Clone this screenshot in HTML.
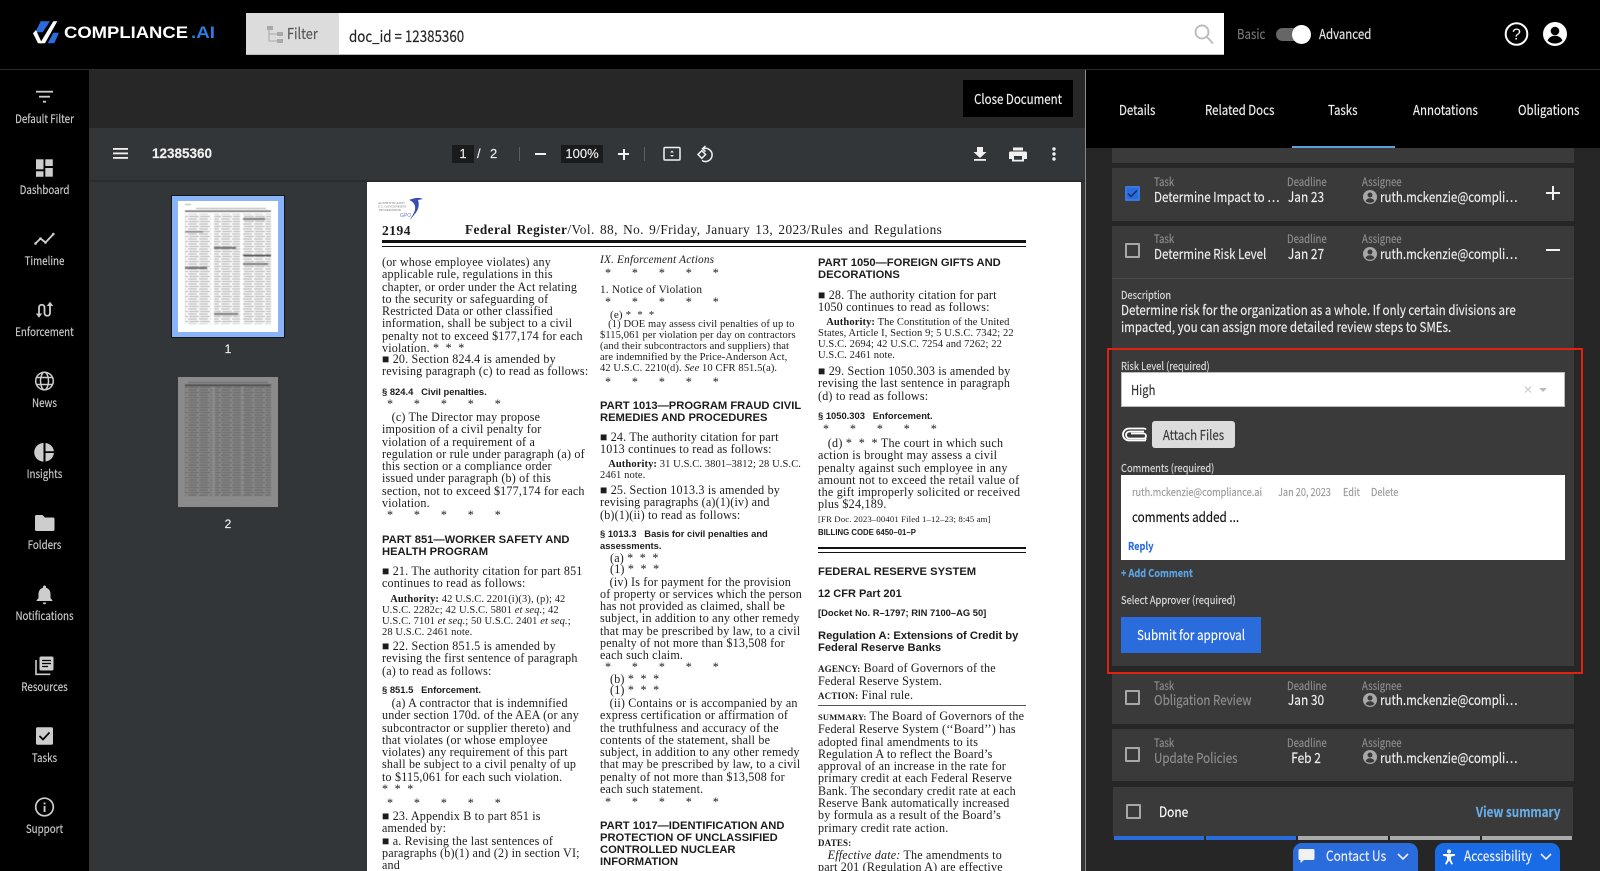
<!DOCTYPE html>
<html><head><meta charset="utf-8"><title>Compliance.ai</title>
<style>
html,body{margin:0;padding:0;background:#000}
body{width:1600px;height:871px;position:relative;overflow:hidden;font-family:"Noto Sans CJK JP","Liberation Sans",sans-serif;color:#fff}
div,span,svg{box-sizing:border-box}
.a{position:absolute}
.t{position:absolute;white-space:nowrap;line-height:20px;transform:scaleX(.85);transform-origin:0 50%;-webkit-text-stroke:.15px currentColor}
.t.c{transform-origin:50% 50%}
.t.rt{transform-origin:100% 50%}
.t.r{transform:none}
.nl{position:absolute;left:0;width:89px;text-align:center;font-size:11.500px;line-height:16px;color:#ccc;transform:scaleX(.85);transform-origin:50% 50%;white-space:nowrap;-webkit-text-stroke:.15px currentColor}
.r{font-family:"Liberation Sans",sans-serif}
.card{position:absolute;left:1112px;width:462px;background:#3a3a3a}
.cb{position:absolute;left:1125px;width:15px;height:15px;border:2px solid #a8a8a8;border-radius:1px}
.lb{font-size:11.300px;color:#8e8e8e}
.ti{font-size:13.600px;color:#eee}
.dt{font-size:14px;color:#eee;width:60px;text-align:center;left:1276px;transform-origin:50% 50%}
.em{font-size:13.600px;color:#eee;left:1380px}
.fl{font-size:11px;color:#ddd}
.mt{font-size:10.800px;color:#9a9a9a}
#doc{position:absolute;left:367px;top:182px;width:714px;height:689px;background:#fff;overflow:hidden}
#pg{position:absolute;left:-367px;top:-182px;width:1600px;height:871px;color:#1c1c1c}
#pg div{position:absolute;white-space:nowrap;font:12.1px/12.3px "Liberation Serif",serif;letter-spacing:.18px}
#pg div.s{font-size:10.500px;line-height:10.950px;letter-spacing:.1px}
#pg div.h{font:bold 11.200px/12.300px "Liberation Sans",sans-serif;letter-spacing:0}
#pg div.hs{font:bold 9.400px/12px "Liberation Sans",sans-serif;letter-spacing:0}
#pg div.ln{background:#111}
#pg div.st{word-spacing:17.500px}
</style></head><body>

<!-- header -->
<div class="a" style="left:0;top:0;width:1600px;height:69px;background:#000"></div>
<div class="a" style="left:0;top:69px;width:1600px;height:1px;background:#2c2c2c"></div>
<svg class="a" style="left:30px;top:18px" width="34" height="30" viewBox="0 0 34 30">
<polygon points="10.700,3.300 20,3.300 12.700,14.300 5.300,14.300" fill="#2a6cdc"/>
<polygon points="23.300,14.700 29,14.700 24.300,25.300 17.700,25.300" fill="#2a6cdc"/>
<polygon points="23.300,3.300 27.300,3.300 15,25.300 10,25.300" fill="#fff"/>
<polygon points="3,15.300 6,12 12,25.300 8,25.300" fill="#fff"/>
</svg>
<svg class="a" style="left:60px;top:18px" width="165" height="28"><text x="4" y="20" font-family="Liberation Sans" font-weight="700" font-size="17" fill="#fff" textLength="124" lengthAdjust="spacingAndGlyphs">COMPLIANCE</text><text x="131" y="20" font-family="Liberation Sans" font-weight="700" font-size="17" fill="#2a7de1" textLength="24" lengthAdjust="spacingAndGlyphs">.AI</text></svg>
<div class="a" style="left:246px;top:13px;width:93px;height:42px;background:#dcdcdc;border-bottom:1px solid #bbb"></div>
<div class="a" style="left:339px;top:13px;width:885px;height:42px;background:#fff;border-bottom:1px solid #bbb"></div>
<svg class="a" style="left:266px;top:25px" width="18" height="19" fill="#a9a9a9"><rect x="1" y="1" width="6" height="4"/><rect x="11" y="7" width="6" height="4"/><rect x="11" y="14" width="6" height="4"/><path d="M3 5v11h8M3 9h8" fill="none" stroke="#a9a9a9" stroke-width="1"/></svg>
<div class="t" style="left:287px;top:24px;font-size:15px;color:#555">Filter</div>
<div class="t" style="left:349px;top:26px;font-size:15.700px;color:#222">doc_id = 12385360</div>
<svg class="a" style="left:1192px;top:22px" width="24" height="24" fill="none" stroke="#bdbdbd" stroke-width="2"><circle cx="10" cy="10" r="6.500"/><path d="M15 15l6 6.500"/></svg>
<div class="t" style="left:1237px;top:23px;font-size:13.500px;color:#777">Basic</div>
<div class="a" style="left:1276px;top:28px;width:30px;height:13px;border-radius:7px;background:#666"></div>
<div class="a" style="left:1292px;top:25px;width:19px;height:19px;border-radius:50%;background:#fff"></div>
<div class="t" style="left:1319px;top:23px;font-size:13.500px;color:#e6e6e6">Advanced</div>
<svg class="a" style="left:1503px;top:21px" width="27" height="26"><circle cx="13.500" cy="13" r="10.800" fill="none" stroke="#fff" stroke-width="2"/><text x="13.500" y="18.500" text-anchor="middle" font-family="Liberation Sans" font-size="16" fill="#fff">?</text></svg>
<svg class="a" style="left:1543px;top:22px" width="24" height="24"><circle cx="12" cy="12" r="12" fill="#fff"/><circle cx="12" cy="9" r="4.300" fill="#000"/><path d="M4.500 18.500c1.500-3.500 4.500-4.800 7.500-4.800s6 1.300 7.500 4.800c-2 2-4.500 3-7.500 3s-5.500-1-7.500-3z" fill="#000"/></svg>

<!-- sidebar -->
<div class="a" style="left:0;top:70px;width:89px;height:801px;background:#000"></div>
<svg class="a" style="left:0;top:70px" width="89" height="801" fill="#cdcdcd">
<g transform="translate(0,-70)">
<rect x="36" y="90.800" width="17" height="1.800"/><rect x="39" y="95.800" width="11" height="1.800"/><rect x="43" y="100.800" width="3" height="1.800"/>
<rect x="36" y="159.300" width="7.500" height="10"/><rect x="45.300" y="159.300" width="7.500" height="6.700"/><rect x="36" y="171.300" width="7.500" height="5.500"/><rect x="45.300" y="168" width="7.500" height="8.700"/>
<path d="M35.500 243.500l5-5 5 4 8-8.500" fill="none" stroke="#cdcdcd" stroke-width="1.900"/><circle cx="35.500" cy="243.500" r="1.300"/><circle cx="40.500" cy="238.500" r="1.300"/><circle cx="45.500" cy="242.500" r="1.300"/><circle cx="53.300" cy="234" r="1.300"/>
<path d="M39 315v-8a2.800 2.800 0 0 1 5.500 0v6.500a2.800 2.800 0 0 0 5.500 0v-9" fill="none" stroke="#cdcdcd" stroke-width="1.800"/><path d="M35.800 313.500h6.400l-3.200 4.200zM46.800 306h6.400l-3.200-4.200z"/>
<g fill="none" stroke="#cdcdcd" stroke-width="1.500"><circle cx="44.500" cy="381" r="8.800"/><ellipse cx="44.500" cy="381" rx="4" ry="8.800"/><path d="M36.500 377.500h16M36.500 384.500h16"/></g>
<path d="M43.500 443v18.600a9.300 9.300 0 0 1 0-18.600zM45.500 443a9.300 9.300 0 0 1 8.400 8.300h-8.400zM45.500 453h8.400a9.300 9.300 0 0 1-8.400 8.500z"/>
<path d="M36.500 515h6l2.500 2.500h8a1.500 1.500 0 0 1 1.500 1.500v10.500a1.500 1.500 0 0 1-1.500 1.500h-16.500a1.500 1.500 0 0 1-1.500-1.500v-13a1.500 1.500 0 0 1 1.500-1.500z"/>
<path d="M44.500 585.500a1.500 1.500 0 0 1 1.500 1.500v.7c3 .8 4.500 3.300 4.500 6.300v4l2 2.500v.5h-16v-.5l2-2.500v-4c0-3 1.500-5.500 4.500-6.300v-.7a1.500 1.500 0 0 1 1.500-1.500zM42.800 602.500h3.400a1.700 1.700 0 0 1-3.400 0z"/>
<rect x="39.500" y="656.500" width="14" height="14" rx="1.500"/><path d="M36 660v14.300h14.300" fill="none" stroke="#cdcdcd" stroke-width="1.600"/><path d="M42 660.500h9M42 663.500h9M42 666.500h6" stroke="#000" stroke-width="1.300"/>
<rect x="36" y="727.300" width="17" height="17.500" rx="1.500"/><path d="M39.500 736l3.500 3.500 6.500-7" fill="none" stroke="#000" stroke-width="1.700"/>
<circle cx="44.500" cy="807" r="8.800" fill="none" stroke="#cdcdcd" stroke-width="1.700"/><rect x="43.600" y="806" width="1.900" height="6"/><rect x="43.600" y="802.500" width="1.900" height="1.900"/>
</g></svg>
<div class="nl" style="top:110.500px">Default Filter</div>
<div class="nl" style="top:182px">Dashboard</div>
<div class="nl" style="top:253px">Timeline</div>
<div class="nl" style="top:324px">Enforcement</div>
<div class="nl" style="top:395px">News</div>
<div class="nl" style="top:466px">Insights</div>
<div class="nl" style="top:537px">Folders</div>
<div class="nl" style="top:608px">Notifications</div>
<div class="nl" style="top:679px">Resources</div>
<div class="nl" style="top:750px">Tasks</div>
<div class="nl" style="top:821px">Support</div>

<!-- viewer -->
<div class="a" style="left:89px;top:70px;width:996px;height:58px;background:#272727"></div>
<div class="a" style="left:89px;top:128px;width:996px;height:743px;background:#323639"></div>
<div class="a" style="left:89px;top:180px;width:996px;height:2px;background:#2a2d30"></div>
<div class="a" style="left:963px;top:80px;width:110px;height:37px;background:#000"></div>
<div class="t c" style="left:963px;top:88px;width:110px;text-align:center;font-size:13.500px;color:#f2f2f2">Close Document</div>
<svg class="a" style="left:112px;top:147px" width="18" height="13" fill="#f1f1f1"><rect x="1" y="1" width="15" height="1.800"/><rect x="1" y="5.500" width="15" height="1.800"/><rect x="1" y="10" width="15" height="1.800"/></svg>
<div class="t r" style="left:152px;top:144px;font-size:13.500px;font-weight:700;color:#f1f1f1">12385360</div>
<div class="a" style="left:452px;top:145px;width:22px;height:18px;background:#191b1c"></div>
<div class="t r" style="left:452px;top:144px;width:22px;text-align:center;font-size:13px;color:#f1f1f1">1</div>
<div class="t r" style="left:477px;top:144px;font-size:13px;color:#f1f1f1">/</div>
<div class="t r" style="left:490px;top:144px;font-size:13px;color:#f1f1f1">2</div>
<div class="a" style="left:519px;top:147px;width:1px;height:14px;background:#5c5f61"></div>
<div class="a" style="left:535px;top:153px;width:11px;height:2px;background:#f1f1f1"></div>
<div class="a" style="left:561px;top:145px;width:42px;height:18px;background:#191b1c"></div>
<div class="t r" style="left:561px;top:144px;width:42px;text-align:center;font-size:13px;color:#f1f1f1">100%</div>
<div class="a" style="left:618px;top:153px;width:11px;height:2px;background:#f1f1f1"></div>
<div class="a" style="left:622.500px;top:148.500px;width:2px;height:11px;background:#f1f1f1"></div>
<div class="a" style="left:644px;top:147px;width:1px;height:14px;background:#5c5f61"></div>
<svg class="a" style="left:663px;top:145px" width="60" height="18" fill="none" stroke="#f1f1f1" stroke-width="1.500"><rect x="1" y="2.500" width="16" height="12.500" rx="1"/><path d="M7 7.500l2-2 2 2zM7 10l2 2 2-2z" fill="#f1f1f1" stroke="none"/><path d="M35 9.500l3.800-3.800 3.800 3.800-3.800 3.800z"/><path d="M40 3.800a6.600 6.600 0 1 1-1 11.700"/><path d="M42.500 1l-3 2.800 3 2.800"/></svg>
<svg class="a" style="left:972px;top:145px" width="60" height="18" fill="#f1f1f1"><path d="M5 2h6v5h3.500l-6.500 6-6.500-6H5z"/><rect x="2" y="14" width="12" height="1.800"/><path d="M41 2.500h10v3H41zM38.500 6.500h15a1.500 1.500 0 0 1 1.500 1.500v6h-3v2.500H40V14h-3V8a1.500 1.500 0 0 1 1.500-1.500zM42 11v3.800h8V11z"/></svg>
<svg class="a" style="left:1050px;top:145px" width="8" height="18" fill="#f1f1f1"><circle cx="4" cy="4" r="1.700"/><circle cx="4" cy="9" r="1.700"/><circle cx="4" cy="14" r="1.700"/></svg>

<!-- thumbnails -->
<div class="a" style="left:172px;top:196px;width:112px;height:141px;background:#8ab4f8;box-shadow:0 0 0 1px #15171a"></div>
<div class="a" style="left:178px;top:201px;width:100px;height:131px;background:#fff"></div>
<svg class="a" style="left:178px;top:201px;filter:blur(.4px)" width="100" height="131">
<defs><pattern id="p1" width="11" height="5" patternUnits="userSpaceOnUse"><rect width="10" height="1" fill="#a4a4a4"/><rect x="-4" y="2.500" width="12" height="1" fill="#a4a4a4"/><rect x="10" y="2.500" width="1" height="1" fill="#a4a4a4"/></pattern></defs>
<rect x="7" y="3" width="6" height="1" fill="#aaa"/><rect x="18" y="7" width="70" height="1" fill="#aaa"/><rect x="7" y="9.500" width="86" height="1.300" fill="#555"/>
<rect x="7" y="13" width="26" height="110" fill="url(#p1)"/><rect x="36" y="13" width="26" height="110" fill="url(#p1)"/><rect x="65" y="13" width="28" height="110" fill="url(#p1)"/>
<rect x="65" y="54" width="28" height="1" fill="#111"/><rect x="7" y="30" width="18" height="1.500" fill="#777"/><rect x="7" y="66" width="22" height="2" fill="#777"/><rect x="36" y="46" width="22" height="2" fill="#777"/><rect x="65" y="17" width="22" height="2" fill="#777"/><rect x="65" y="62" width="25" height="2" fill="#777"/><rect x="36" y="112" width="24" height="2" fill="#777"/>
</svg>
<div class="t r" style="left:172px;top:339px;width:112px;text-align:center;font-size:12px;color:#f1f1f1">1</div>
<div class="a" style="left:177.500px;top:376.500px;width:100px;height:130px;background:#8b8b8b"></div>
<svg class="a" style="left:177.500px;top:376.500px;filter:blur(.5px)" width="100" height="130">
<defs><pattern id="p2" width="11" height="5" patternUnits="userSpaceOnUse"><rect width="10" height="1.200" fill="#666"/><rect x="-4" y="2.500" width="12" height="1.200" fill="#666"/><rect x="10" y="2.500" width="1" height="1.200" fill="#666"/></pattern></defs>
<rect x="10" y="5" width="80" height="1" fill="#6b6b6b"/><rect x="7" y="7.500" width="86" height="1.600" fill="#444"/>
<rect x="7" y="10" width="27" height="110" fill="url(#p2)"/><rect x="37" y="10" width="26" height="110" fill="url(#p2)"/><rect x="65" y="10" width="28" height="110" fill="url(#p2)"/>
</svg>
<div class="t r" style="left:172px;top:513.500px;width:112px;text-align:center;font-size:12px;color:#f1f1f1">2</div>

<!-- document page -->
<div id="doc"><div id="pg">
<svg class="a" style="left:377px;top:196px" width="50" height="28" fill="none"><g fill="#777" font-family="Liberation Serif" font-size="3.200"><text x="1" y="8">AUTHENTICATED</text><text x="1" y="11.500">U.S. GOVERNMENT</text><text x="2" y="15">INFORMATION</text></g><text x="23" y="21" fill="#6a7cc9" font-family="Liberation Sans" font-size="5">GPO</text><path d="M32 4c5-2 10-3 14-1l-5 1c2 5 0 11-4 15l-4 5c2-5 6-8 5-14-1-3-3-5-6-6z" fill="#3a4db0"/></svg>
<div style="left:382px;top:224px;font:bold 13.500px/14px 'Liberation Serif',serif;letter-spacing:.5px">2194</div>
<div style="left:465px;top:223px;font:13.300px/14px 'Liberation Serif',serif;letter-spacing:.42px;word-spacing:1.500px"><b>Federal Register</b>/Vol. 88, No. 9/Friday, January 13, 2023/Rules and Regulations</div>
<div class="ln" style="left:382px;top:240px;width:643.500px;height:3px"></div>
<div class="ln" style="left:382px;top:246px;width:643.500px;height:1px"></div>

<!-- column 1 -->
<div style="left:382px;top:256px">(or whose employee violates) any<br>applicable rule, regulations in this<br>chapter, or order under the Act relating<br>to the security or safeguarding of<br>Restricted Data or other classified<br>information, shall be subject to a civil<br>penalty not to exceed $177,174 for each<br>violation. *&nbsp; *&nbsp; *</div>
<div style="left:382px;top:353px">■ 20. Section 824.4 is amended by<br>revising paragraph (c) to read as follows:</div>
<div class="hs" style="left:382px;top:386px">§ 824.4&nbsp;&nbsp; Civil penalties.</div>
<div class="st" style="left:387px;top:398px">* * * * *</div>
<div style="left:382px;top:411px">&nbsp;&nbsp;&nbsp;(c) The Director may propose<br>imposition of a civil penalty for<br>violation of a requirement of a<br>regulation or rule under paragraph (a) of<br>this section or a compliance order<br>issued under paragraph (b) of this<br>section, not to exceed $177,174 for each<br>violation.</div>
<div class="st" style="left:387px;top:509px">* * * * *</div>
<div class="h" style="left:382px;top:534px">PART 851—WORKER SAFETY AND<br>HEALTH PROGRAM</div>
<div style="left:382px;top:565px">■ 21. The authority citation for part 851<br>continues to read as follows:</div>
<div class="s" style="left:382px;top:595px">&nbsp;&nbsp;&nbsp;<b>Authority:</b> 42 U.S.C. 2201(i)(3), (p); 42<br>U.S.C. 2282c; 42 U.S.C. 5801 <i>et seq.</i>; 42<br>U.S.C. 7101 <i>et seq.</i>; 50 U.S.C. 2401 <i>et seq.</i>;<br>28 U.S.C. 2461 note.</div>
<div style="left:382px;top:640px">■ 22. Section 851.5 is amended by<br>revising the first sentence of paragraph<br>(a) to read as follows:</div>
<div class="hs" style="left:382px;top:684px">§ 851.5&nbsp;&nbsp; Enforcement.</div>
<div style="left:382px;top:697px">&nbsp;&nbsp;&nbsp;(a) A contractor that is indemnified<br>under section 170d. of the AEA (or any<br>subcontractor or supplier thereto) and<br>that violates (or whose employee<br>violates) any requirement of this part<br>shall be subject to a civil penalty of up<br>to $115,061 for each such violation.<br>*&nbsp; *&nbsp; *</div>
<div class="st" style="left:387px;top:797px">* * * * *</div>
<div style="left:382px;top:810px">■ 23. Appendix B to part 851 is<br>amended by:<br>■ a. Revising the last sentences of<br>paragraphs (b)(1) and (2) in section VI;<br>and</div>

<!-- column 2 -->
<div style="left:600px;top:254px;font-size:11.300px;font-style:italic">IX. Enforcement Actions</div>
<div class="st" style="left:605px;top:267px">* * * * *</div>
<div style="left:600px;top:283.500px;font-size:11.300px">1. Notice of Violation</div>
<div class="st" style="left:605px;top:296px">* * * * *</div>
<div style="left:610px;top:309px;font-size:11px">(e) *&nbsp; *&nbsp; *</div>
<div class="s" style="left:600px;top:320px">&nbsp;&nbsp;&nbsp;(1) DOE may assess civil penalties of up to<br>$115,061 per violation per day on contractors<br>(and their subcontractors and suppliers) that<br>are indemnified by the Price-Anderson Act,<br>42 U.S.C. 2210(d). <i>See</i> 10 CFR 851.5(a).</div>
<div class="st" style="left:605px;top:376px">* * * * *</div>
<div class="h" style="left:600px;top:400px">PART 1013—PROGRAM FRAUD CIVIL<br>REMEDIES AND PROCEDURES</div>
<div style="left:600px;top:431px">■ 24. The authority citation for part<br>1013 continues to read as follows:</div>
<div class="s" style="left:600px;top:460px">&nbsp;&nbsp;&nbsp;<b>Authority:</b> 31 U.S.C. 3801–3812; 28 U.S.C.<br>2461 note.</div>
<div style="left:600px;top:484px">■ 25. Section 1013.3 is amended by<br>revising paragraphs (a)(1)(iv) and<br>(b)(1)(ii) to read as follows:</div>
<div class="hs" style="left:600px;top:528px">§ 1013.3&nbsp;&nbsp; Basis for civil penalties and<br>assessments.</div>
<div style="left:610px;top:553px;line-height:11px">(a) *&nbsp; *&nbsp; *<br>(1) *&nbsp; *&nbsp; *</div>
<div style="left:600px;top:575.500px">&nbsp;&nbsp;&nbsp;(iv) Is for payment for the provision<br>of property or services which the person<br>has not provided as claimed, shall be<br>subject, in addition to any other remedy<br>that may be prescribed by law, to a civil<br>penalty of not more than $13,508 for<br>each such claim.</div>
<div class="st" style="left:605px;top:661px">* * * * *</div>
<div style="left:610px;top:674px;line-height:11px">(b) *&nbsp; *&nbsp; *<br>(1) *&nbsp; *&nbsp; *</div>
<div style="left:600px;top:697px">&nbsp;&nbsp;&nbsp;(ii) Contains or is accompanied by an<br>express certification or affirmation of<br>the truthfulness and accuracy of the<br>contents of the statement, shall be<br>subject, in addition to any other remedy<br>that may be prescribed by law, to a civil<br>penalty of not more than $13,508 for<br>each such statement.</div>
<div class="st" style="left:605px;top:796px">* * * * *</div>
<div class="h" style="left:600px;top:819.500px">PART 1017—IDENTIFICATION AND<br>PROTECTION OF UNCLASSIFIED<br>CONTROLLED NUCLEAR<br>INFORMATION</div>

<!-- column 3 -->
<div class="h" style="left:818px;top:257px">PART 1050—FOREIGN GIFTS AND<br>DECORATIONS</div>
<div style="left:818px;top:289px">■ 28. The authority citation for part<br>1050 continues to read as follows:</div>
<div class="s" style="left:818px;top:318px">&nbsp;&nbsp;&nbsp;<b>Authority:</b> The Constitution of the United<br>States, Article I, Section 9; 5 U.S.C. 7342; 22<br>U.S.C. 2694; 42 U.S.C. 7254 and 7262; 22<br>U.S.C. 2461 note.</div>
<div style="left:818px;top:365px">■ 29. Section 1050.303 is amended by<br>revising the last sentence in paragraph<br>(d) to read as follows:</div>
<div class="hs" style="left:818px;top:410px">§ 1050.303&nbsp;&nbsp; Enforcement.</div>
<div class="st" style="left:823px;top:423px">* * * * *</div>
<div style="left:818px;top:437px;letter-spacing:.24px">&nbsp;&nbsp;&nbsp;(d) *&nbsp; *&nbsp; * The court in which such<br>action is brought may assess a civil<br>penalty against such employee in any<br>amount not to exceed the retail value of<br>the gift improperly solicited or received<br>plus $24,189.</div>
<div class="s" style="left:818px;top:514px;font-size:8.800px">[FR Doc. 2023–00401 Filed 1–12–23; 8:45 am]</div>
<div class="hs" style="left:818px;top:527px;font-size:7.800px">BILLING CODE 6450–01–P</div>
<div class="ln" style="left:818px;top:547px;width:207.500px;height:2px"></div>
<div class="ln" style="left:818px;top:552px;width:207.500px;height:1px"></div>
<div class="h" style="left:818px;top:565.500px">FEDERAL RESERVE SYSTEM</div>
<div class="h" style="left:818px;top:588px;font-size:11px">12 CFR Part 201</div>
<div class="hs" style="left:818px;top:607px">[Docket No. R–1797; RIN 7100–AG 50]</div>
<div class="h" style="left:818px;top:629.500px">Regulation A: Extensions of Credit by<br>Federal Reserve Banks</div>
<div style="left:818px;top:662px"><span style="font-size:9px;font-weight:bold">AGENCY:</span> Board of Governors of the<br>Federal Reserve System.</div>
<div style="left:818px;top:689px"><span style="font-size:9px;font-weight:bold">ACTION:</span> Final rule.</div>
<div class="ln" style="left:818px;top:705px;width:207.500px;height:1px;background:#555"></div>
<div style="left:818px;top:710px"><span style="font-size:8.500px;font-weight:bold">SUMMARY:</span> The Board of Governors of the<br>Federal Reserve System (‘‘Board’’) has<br>adopted final amendments to its<br>Regulation A to reflect the Board’s<br>approval of an increase in the rate for<br>primary credit at each Federal Reserve<br>Bank. The secondary credit rate at each<br>Reserve Bank automatically increased<br>by formula as a result of the Board’s<br>primary credit rate action.</div>
<div style="left:818px;top:837px;font-size:9px;font-weight:bold">DATES:</div>
<div style="left:818px;top:849px">&nbsp;&nbsp;&nbsp;<i>Effective date:</i> The amendments to<br>part 201 (Regulation A) are effective</div>
</div></div>

<!-- right panel -->
<div class="a" style="left:1085px;top:70px;width:1px;height:801px;background:#8a8a8a"></div>
<div class="a" style="left:1086px;top:70px;width:514px;height:78px;background:#000"></div>
<div class="a" style="left:1086px;top:148px;width:514px;height:723px;background:#262626"></div>
<div class="t" style="left:1119px;top:99px;font-size:13.500px;color:#f1f1f1">Details</div>
<div class="t" style="left:1205px;top:99px;font-size:13.500px;color:#f1f1f1">Related Docs</div>
<div class="t" style="left:1328px;top:99px;font-size:13.500px;color:#f1f1f1">Tasks</div>
<div class="t" style="left:1413px;top:99px;font-size:13.500px;color:#f1f1f1">Annotations</div>
<div class="t" style="left:1518px;top:99px;font-size:13.500px;color:#f1f1f1">Obligations</div>
<div class="a" style="left:1292px;top:146px;width:103px;height:2px;background:#5b9fdc"></div>

<div class="card" style="top:148px;height:15px"></div>
<div class="card" style="top:168px;height:53px"></div>
<div class="card" style="top:226px;height:440px"></div>
<div class="a" style="left:1112px;top:278px;width:462px;height:1px;background:#4a4a4a"></div>
<div class="card" style="top:674px;height:50px"></div>
<div class="card" style="top:729px;height:52px"></div>
<div class="card" style="top:787px;left:1113px;width:460px;height:49px"></div>

<!-- row 1 -->
<div class="cb" style="top:186px;background:#2a6cdc;border-color:#3a78e0"></div>
<svg class="a" style="left:1125px;top:186px" width="15" height="15" fill="none" stroke="#0f2c66" stroke-width="1.500"><path d="M3 7.500l3 3 6-6"/></svg>
<div class="t lb" style="left:1154px;top:172px">Task</div>
<div class="t ti" style="left:1154px;top:186px">Determine Impact to …</div>
<div class="t lb" style="left:1287px;top:172px">Deadline</div>
<div class="t dt" style="top:187px">Jan 23</div>
<div class="t lb" style="left:1362px;top:172px">Assignee</div>
<svg class="a" style="left:1363px;top:190px" width="14" height="14"><circle cx="7" cy="7" r="7" fill="#a8a8a8"/><circle cx="7" cy="5" r="2.500" fill="#3a3a3a"/><path d="M2.500 11c1-2 2.800-2.800 4.500-2.800s3.500.8 4.500 2.800c-1.200 1-2.800 1.700-4.500 1.700s-3.300-.7-4.500-1.700z" fill="#3a3a3a"/></svg>
<div class="t em" style="top:186px">ruth.mckenzie@compli…</div>
<div class="a" style="left:1546px;top:192px;width:14px;height:2px;background:#f1f1f1"></div>
<div class="a" style="left:1552px;top:186px;width:2px;height:14px;background:#f1f1f1"></div>

<!-- row 2 -->
<div class="cb" style="top:243px"></div>
<div class="t lb" style="left:1154px;top:229px">Task</div>
<div class="t ti" style="left:1154px;top:243px">Determine Risk Level</div>
<div class="t lb" style="left:1287px;top:229px">Deadline</div>
<div class="t dt" style="top:244px">Jan 27</div>
<div class="t lb" style="left:1362px;top:229px">Assignee</div>
<svg class="a" style="left:1363px;top:247px" width="14" height="14"><circle cx="7" cy="7" r="7" fill="#a8a8a8"/><circle cx="7" cy="5" r="2.500" fill="#3a3a3a"/><path d="M2.500 11c1-2 2.800-2.800 4.500-2.800s3.500.8 4.500 2.800c-1.200 1-2.800 1.700-4.500 1.700s-3.300-.7-4.500-1.700z" fill="#3a3a3a"/></svg>
<div class="t em" style="top:243px">ruth.mckenzie@compli…</div>
<div class="a" style="left:1546px;top:249px;width:14px;height:2px;background:#f1f1f1"></div>

<div class="t fl" style="left:1121px;top:285px">Description</div>
<div class="t" style="left:1121px;top:299px;font-size:13.600px;color:#eee">Determine risk for the organization as a whole. If only certain divisions are</div>
<div class="t" style="left:1121px;top:316px;font-size:13.600px;color:#eee">impacted, you can assign more detailed review steps to SMEs.</div>

<div class="t fl" style="left:1121px;top:356px">Risk Level (required)</div>
<div class="a" style="left:1121px;top:372px;width:444px;height:35px;background:#fff;border:1px solid #bbb"></div>
<div class="t" style="left:1131px;top:380px;font-size:13.200px;color:#333">High</div>
<svg class="a" style="left:1523px;top:384px" width="28" height="12" fill="none" stroke="#c8c8c8" stroke-width="1.200"><path d="M2 2.500l6 6M8 2.500l-6 6"/><path d="M16 4h8l-4 4z" fill="#bbb" stroke="none"/></svg>
<svg class="a" style="left:1122px;top:426px" width="26" height="17" fill="none" stroke="#fff" stroke-width="1.800"><path d="M22 5.500H7.500a3.500 3.500 0 0 0 0 7h14a2.500 2.500 0 0 0 0-5H9"/><path d="M24 12.500l-1 2H7a6 6 0 0 1 0-12h15a2.500 2.500 0 0 1 2 1"/></svg>
<div class="a" style="left:1152px;top:421px;width:83px;height:27px;background:#dcdcdc;border-radius:3px"></div>
<div class="t c" style="left:1152px;top:423.500px;width:83px;text-align:center;font-size:13.500px;color:#3a3a3a">Attach Files</div>

<div class="t fl" style="left:1121px;top:457.500px">Comments (required)</div>
<div class="a" style="left:1121px;top:474.500px;width:444px;height:85.500px;background:#fff"></div>
<div class="t mt" style="left:1132px;top:482px">ruth.mckenzie@compliance.ai</div>
<div class="t mt" style="left:1278px;top:482px">Jan 20, 2023</div>
<div class="t mt" style="left:1343px;top:482px">Edit</div>
<div class="t mt" style="left:1371px;top:482px">Delete</div>
<div class="t" style="left:1132px;top:506px;font-size:13.700px;color:#111">comments added ...</div>
<div class="t" style="left:1128px;top:536px;font-size:10.800px;font-weight:700;color:#2a6cdc">Reply</div>
<div class="t" style="left:1121px;top:563px;font-size:10.800px;font-weight:700;color:#5ba6e8">+ Add Comment</div>
<div class="t fl" style="left:1121px;top:590px">Select Approver (required)</div>
<div class="a" style="left:1121px;top:617px;width:140px;height:35.500px;background:#2a6cdc"></div>
<div class="t c" style="left:1121px;top:624px;width:140px;text-align:center;font-size:13.700px;color:#fff">Submit for approval</div>

<!-- red box -->
<div class="a" style="left:1107px;top:347.500px;width:476px;height:326px;border:2.600px solid #e3210f"></div>

<!-- row 3 -->
<div class="cb" style="top:689.500px"></div>
<div class="t lb" style="left:1154px;top:675.500px">Task</div>
<div class="t ti" style="left:1154px;top:689px;color:#8e8e8e">Obligation Review</div>
<div class="t lb" style="left:1287px;top:675.500px">Deadline</div>
<div class="t dt" style="top:690px">Jan 30</div>
<div class="t lb" style="left:1362px;top:675.500px">Assignee</div>
<svg class="a" style="left:1363px;top:693px" width="14" height="14"><circle cx="7" cy="7" r="7" fill="#a8a8a8"/><circle cx="7" cy="5" r="2.500" fill="#3a3a3a"/><path d="M2.500 11c1-2 2.800-2.800 4.500-2.800s3.500.8 4.500 2.800c-1.200 1-2.800 1.700-4.500 1.700s-3.300-.7-4.500-1.700z" fill="#3a3a3a"/></svg>
<div class="t em" style="top:689px">ruth.mckenzie@compli…</div>

<!-- row 4 -->
<div class="cb" style="top:747px"></div>
<div class="t lb" style="left:1154px;top:733px">Task</div>
<div class="t ti" style="left:1154px;top:746.500px;color:#8e8e8e">Update Policies</div>
<div class="t lb" style="left:1287px;top:733px">Deadline</div>
<div class="t dt" style="top:747.500px">Feb 2</div>
<div class="t lb" style="left:1362px;top:733px">Assignee</div>
<svg class="a" style="left:1363px;top:750px" width="14" height="14"><circle cx="7" cy="7" r="7" fill="#a8a8a8"/><circle cx="7" cy="5" r="2.500" fill="#3a3a3a"/><path d="M2.500 11c1-2 2.800-2.800 4.500-2.800s3.500.8 4.500 2.800c-1.200 1-2.800 1.700-4.500 1.700s-3.300-.7-4.500-1.700z" fill="#3a3a3a"/></svg>
<div class="t em" style="top:746.500px">ruth.mckenzie@compli…</div>

<!-- done -->
<div class="cb" style="left:1126px;top:804px"></div>
<div class="t" style="left:1159px;top:801.500px;font-size:14px;color:#fff">Done</div>
<div class="t rt" style="right:40px;top:801px;font-size:13.700px;font-weight:700;color:#69ade6">View summary</div>
<div class="a" style="left:1114px;top:836px;width:90px;height:4px;background:#2a6cdc"></div>
<div class="a" style="left:1206px;top:836px;width:90px;height:4px;background:#2a6cdc"></div>
<div class="a" style="left:1298px;top:836px;width:90px;height:4px;background:#ababab"></div>
<div class="a" style="left:1390px;top:836px;width:90px;height:4px;background:#ababab"></div>
<div class="a" style="left:1482px;top:836px;width:90px;height:4px;background:#ababab"></div>

<!-- floating buttons -->
<div class="a" style="left:1293px;top:843px;width:125px;height:28px;background:#2a6cdc;border-radius:9px 9px 0 0"></div>
<svg class="a" style="left:1298px;top:848px" width="17" height="16"><path d="M2 1h13a1.500 1.500 0 0 1 1.500 1.500v8a1.500 1.500 0 0 1-1.500 1.500H6l-3.500 3v-3H2a1.500 1.500 0 0 1-1.500-1.500v-8A1.500 1.500 0 0 1 2 1z" fill="#f1f1f1"/></svg>
<div class="t" style="left:1326px;top:846px;font-size:14px;color:#eef">Contact Us</div>
<svg class="a" style="left:1397px;top:852px" width="12" height="9" fill="none" stroke="#eef" stroke-width="1.600"><path d="M1 2l5 5 5-5"/></svg>
<div class="a" style="left:1435px;top:843px;width:125px;height:28px;background:#1a6be6;border-radius:9px 9px 0 0"></div>
<svg class="a" style="left:1442px;top:849px" width="14" height="16" fill="#fff"><circle cx="7" cy="2.500" r="2"/><path d="M1 5h12v1.600l-4 1v3l2 4.400-1.500.6L7 11.500 4.500 15.600 3 15l2-4.400v-3l-4-1z"/></svg>
<div class="t" style="left:1464px;top:846px;font-size:14px;color:#eef">Accessibility</div>
<svg class="a" style="left:1540px;top:852px" width="12" height="9" fill="none" stroke="#eef" stroke-width="1.600"><path d="M1 2l5 5 5-5"/></svg>

</body></html>
